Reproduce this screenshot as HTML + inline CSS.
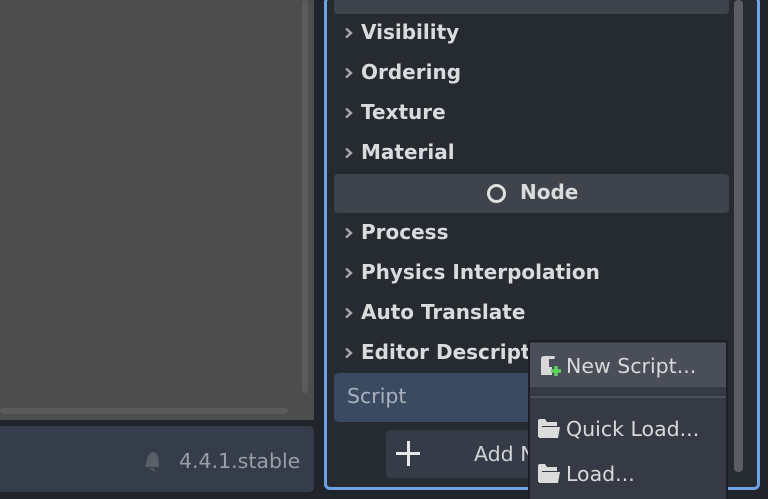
<!DOCTYPE html>
<html style="width:768px;height:499px;overflow:hidden"><head><style>
*{margin:0;padding:0;box-sizing:border-box}
body{width:768px;height:499px;overflow:hidden;background:#21252b;font-family:"DejaVu Sans","Liberation Sans",sans-serif;position:relative}
.a{position:absolute}
.row{position:absolute;left:361px;font-weight:bold;font-size:20px;color:#dadbdd;white-space:nowrap}
.row i{position:absolute;left:-17px;top:8px;width:10px;height:12px}
.pi{position:absolute;left:566px;font-size:20.5px;color:#d8d9db;white-space:nowrap}
</style></head><body>
<div class="a" style="left:0;top:0;width:314px;height:420px;background:#4d4d4d"></div>
<div class="a" style="left:302px;top:0;width:6px;height:393px;background:#5b5b5b;border-radius:3px"></div>
<div class="a" style="left:0;top:408px;width:288px;height:6px;background:#5b5b5b;border-radius:3px"></div>
<div class="a" style="left:0;top:426px;width:314px;height:66px;background:#363d4a;border-radius:0 5px 5px 0"></div>
<svg class="a" style="left:139px;top:447px" width="24" height="28" viewBox="0 0 24 28"><path d="M6 20 C8 14 8 6 14 5 C20 6 20 14 20 20 Z M10 21 L18 26 L14 21 Z" fill="#5a5f67"/></svg>
<div class="a" style="left:179px;top:449px;font-size:20.5px;color:#999ea6">4.4.1.stable</div>

<div class="a" style="left:324px;top:-4px;width:436px;height:494px;border:3px solid #6ea2e5;border-radius:6px;background:#262a31"></div>
<div class="a" style="left:334px;top:-6px;width:395px;height:20px;background:#3f434b;border-radius:4px"></div>
<div class="a" style="left:734px;top:0;width:9px;height:472px;background:#5a5d63;border-radius:4px"></div>

<svg width="0" height="0" style="position:absolute"><defs><symbol id="c" viewBox="0 0 10 12"><path d="M2 1.5 L7 6 L2 10.5" fill="none" stroke="#a6a8ac" stroke-width="2.4"/></symbol></defs></svg>
<div class="row" style="top:20px"><svg class="a" style="left:-17px;top:7px" width="10" height="12"><use href="#c"/></svg>Visibility</div>
<div class="row" style="top:60px"><svg class="a" style="left:-17px;top:7px" width="10" height="12"><use href="#c"/></svg>Ordering</div>
<div class="row" style="top:100px"><svg class="a" style="left:-17px;top:7px" width="10" height="12"><use href="#c"/></svg>Texture</div>
<div class="row" style="top:140px"><svg class="a" style="left:-17px;top:7px" width="10" height="12"><use href="#c"/></svg>Material</div>
<div class="a" style="left:334px;top:174px;width:395px;height:39px;background:#3f434b;border-radius:4px"></div>
<div class="a" style="left:487px;top:184px;width:19px;height:19px;border:3px solid #e0e0e0;border-radius:50%"></div>
<div class="a" style="left:520px;top:180px;font-weight:bold;font-size:20px;color:#dadbdd">Node</div>
<div class="row" style="top:220px"><svg class="a" style="left:-17px;top:7px" width="10" height="12"><use href="#c"/></svg>Process</div>
<div class="row" style="top:260px"><svg class="a" style="left:-17px;top:7px" width="10" height="12"><use href="#c"/></svg>Physics Interpolation</div>
<div class="row" style="top:300px"><svg class="a" style="left:-17px;top:7px" width="10" height="12"><use href="#c"/></svg>Auto Translate</div>
<div class="row" style="top:340px"><svg class="a" style="left:-17px;top:7px" width="10" height="12"><use href="#c"/></svg>Editor Description</div>
<div class="a" style="left:334px;top:373px;width:300px;height:49px;background:#3a4a60;border-radius:5px"></div>
<div class="a" style="left:347px;top:384px;font-size:20.5px;color:#a9b1bc">Script</div>
<div class="a" style="left:386px;top:430px;width:300px;height:48px;background:#363c47;border-radius:4px"></div>
<div class="a" style="left:396px;top:452px;width:24px;height:3px;background:#e8e8e8"></div>
<div class="a" style="left:407px;top:441px;width:3px;height:25px;background:#e8e8e8"></div>
<div class="a" style="left:474px;top:442px;font-size:20.5px;color:#d0d2d5">Add Node</div>

<div class="a" style="left:528px;top:340px;width:200px;height:165px;background:#353a44;border:2px solid #1d2025;border-radius:3px"></div>
<div class="a" style="left:530px;top:343px;width:196px;height:44px;background:#494e58"></div>
<div class="a" style="left:530px;top:396px;width:196px;height:2px;background:#4a4f58"></div>
<svg class="a" style="left:537px;top:355px" width="26" height="24" viewBox="0 0 26 24"><path d="M4 20 L4 4 Q4 1 7 1 L17 1 Q19 2 17 4 L12 4 L12 12 L15 12 L15 20 Z" fill="#d8d8d8"/><path d="M14 16h10M19 11v10" stroke="#5fd35f" stroke-width="3.5"/></svg>
<div class="pi" style="top:354px">New Script...</div>
<svg class="a" style="left:537px;top:418px" width="24" height="22" viewBox="0 0 24 22"><path d="M1 3 Q1 1 3 1 L8 1 L10 4 L20 4 L20 8 L5 8 L3 19 L1 19 Z M5 9 L23 9 L21 20 L2 20 Z" fill="#dcdcdc"/></svg>
<div class="pi" style="top:417px">Quick Load...</div>
<svg class="a" style="left:537px;top:463px" width="24" height="22" viewBox="0 0 24 22"><path d="M1 3 Q1 1 3 1 L8 1 L10 4 L20 4 L20 8 L5 8 L3 19 L1 19 Z M5 9 L23 9 L21 20 L2 20 Z" fill="#dcdcdc"/></svg>
<div class="pi" style="top:462px">Load...</div>
</body></html>
